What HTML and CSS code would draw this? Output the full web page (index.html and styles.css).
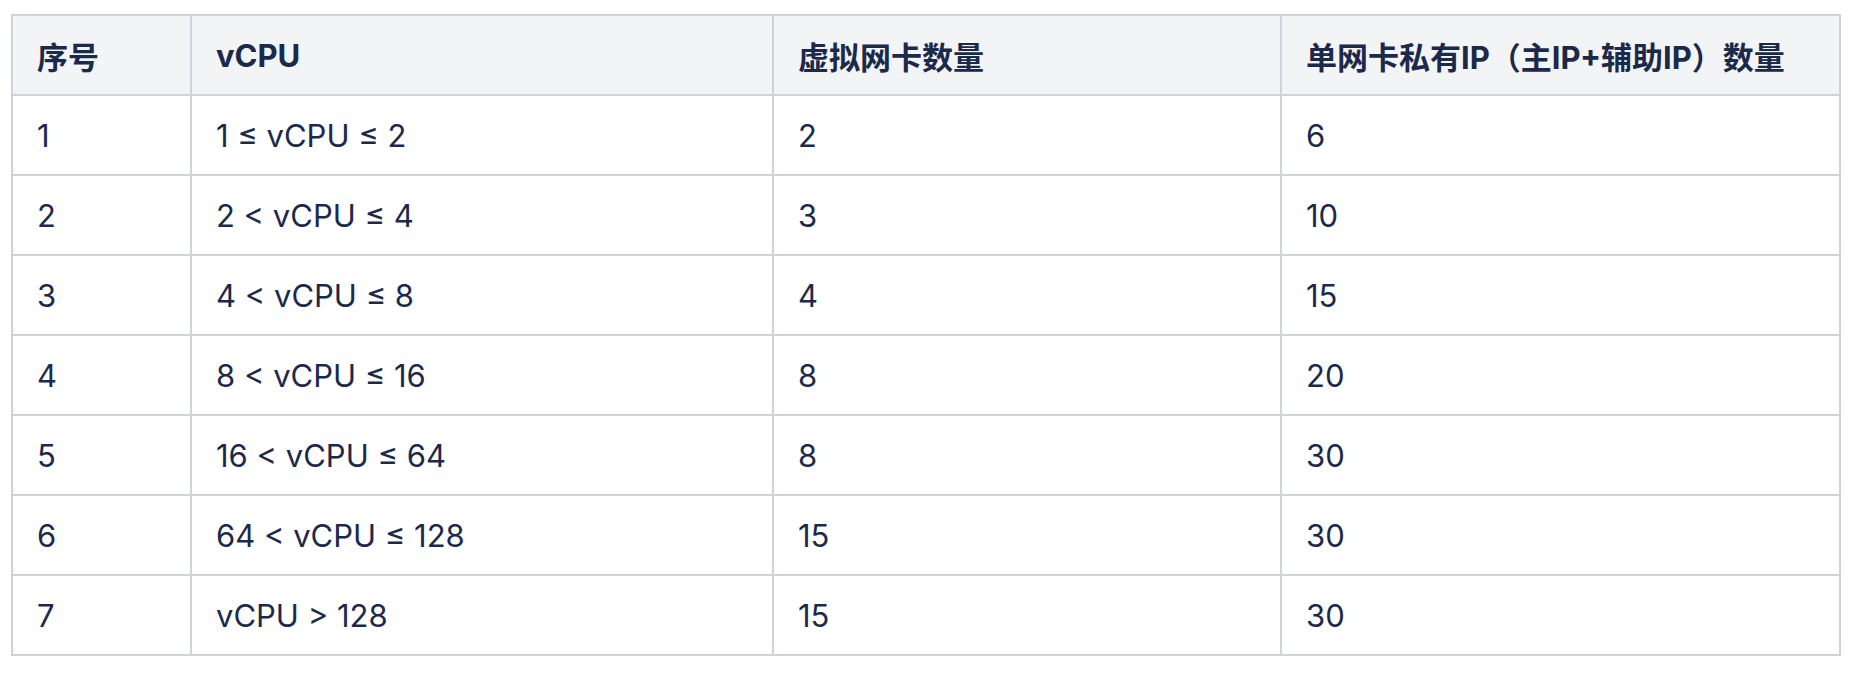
FILE: index.html
```html
<!DOCTYPE html>
<html lang="zh-CN">
<head>
<meta charset="utf-8">
<title>vCPU 与网卡数量</title>
<link rel="stylesheet" href="styles.css">
</head>
<body>
<table class="spec-table">
  <colgroup>
    <col class="c1"><col class="c2"><col class="c3"><col class="c4">
  </colgroup>
  <thead>
    <tr><th>序号</th><th>vCPU</th><th>虚拟网卡数量</th><th>单网卡私有IP（主IP+辅助IP）数量</th></tr>
  </thead>
  <tbody>
    <tr><td>1</td><td>1 ≤ vCPU ≤ 2</td><td>2</td><td>6</td></tr>
    <tr><td>2</td><td>2 &lt; vCPU ≤ 4</td><td>3</td><td>10</td></tr>
    <tr><td>3</td><td>4 &lt; vCPU ≤ 8</td><td>4</td><td>15</td></tr>
    <tr><td>4</td><td>8 &lt; vCPU ≤ 16</td><td>8</td><td>20</td></tr>
    <tr><td>5</td><td>16 &lt; vCPU ≤ 64</td><td>8</td><td>30</td></tr>
    <tr><td>6</td><td>64 &lt; vCPU ≤ 128</td><td>15</td><td>30</td></tr>
    <tr><td>7</td><td>vCPU &gt; 128</td><td>15</td><td>30</td></tr>
  </tbody>
</table>
</body>
</html>
```
FILE: styles.css
```css
html, body {
  margin: 0;
  background: #ffffff;
}
body {
  padding: 14px 0 0 11px;
  font-family: Inter, "Noto Sans CJK SC", sans-serif;
  color: #1b294a;
}
.spec-table {
  border-collapse: collapse;
  table-layout: fixed;
  width: 1828px;
  font-size: 31px;
}
.c1 { width: 179px; }
.c2 { width: 582px; }
.c3 { width: 508px; }
.c4 { width: 559px; }
.spec-table th,
.spec-table td {
  border: 2px solid #ced2da;
  height: 80px;
  padding: 0 24px;
  text-align: left;
  vertical-align: middle;
  white-space: nowrap;
  box-sizing: border-box;
}
.spec-table th {
  background: #f3f4f6;
  font-weight: 700;
}
.spec-table td {
  font-weight: 400;
}
```
